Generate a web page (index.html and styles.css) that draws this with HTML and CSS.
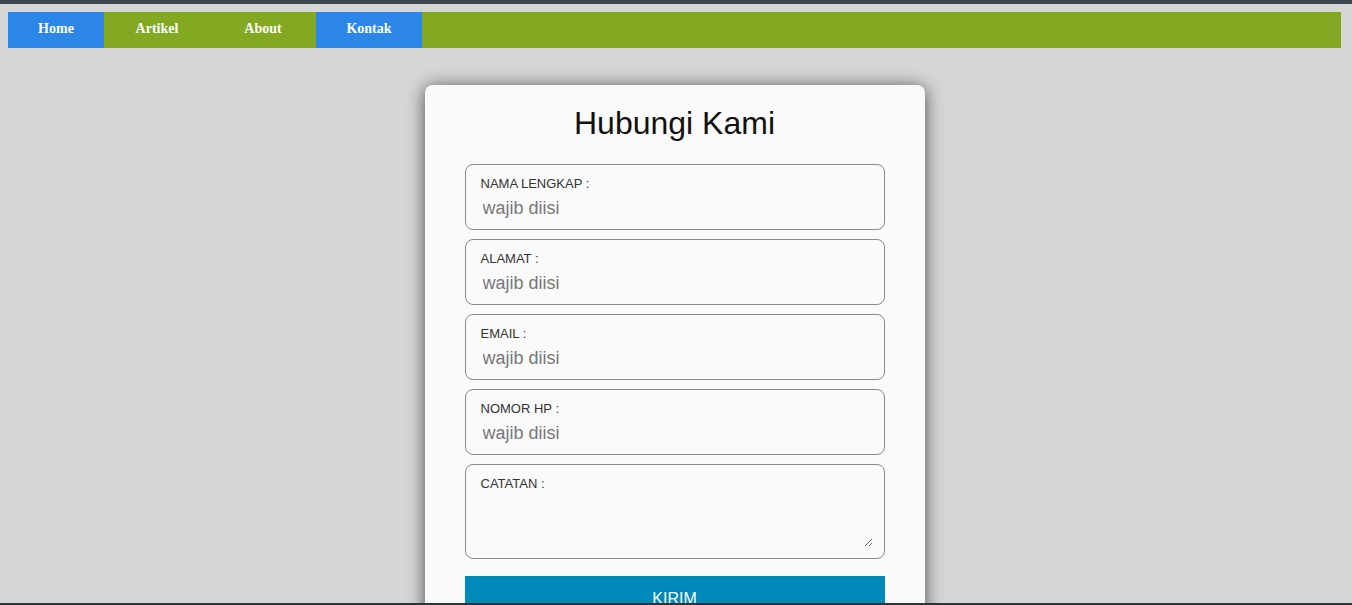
FILE: index.html
```html
<!DOCTYPE html>
<html lang="id">

<head>
    <meta charset="UTF-8">
    <meta name="viewport" content="width=device-width, initial-scale=1.0">
    <title>Kontak</title>
    <link rel="stylesheet" href="styles.css">
</head>

<body>
    <nav class="menu">
        <a class="menu-item menu-blue home" href="#">Home</a>
        <a class="menu-item" href="#">Artikel</a>
        <a class="menu-item" href="#">About</a>
        <a class="menu-item menu-blue" href="#">Kontak</a>
    </nav>

    <div class="card">
        <h2>Hubungi Kami</h2>
        <form class="form-kontak">
            <div class="field">
                <label for="nama">NAMA LENGKAP :</label>
                <input type="text" id="nama" placeholder="wajib diisi">
            </div>
            <div class="field">
                <label for="alamat">ALAMAT :</label>
                <input type="text" id="alamat" placeholder="wajib diisi">
            </div>
            <div class="field">
                <label for="email">EMAIL :</label>
                <input type="text" id="email" placeholder="wajib diisi">
            </div>
            <div class="field">
                <label for="hp">NOMOR HP :</label>
                <input type="text" id="hp" placeholder="wajib diisi">
            </div>
            <div class="field field-note">
                <label for="catatan">CATATAN :</label>
                <textarea id="catatan"></textarea>
            </div>
            <button type="submit" class="btn-kirim">KIRIM</button>
        </form>
    </div>

    <div class="bottom-line"></div>
</body>

</html>
```

FILE: styles.css
```css
html {
    border-top: 4px solid #3c474f;
    background-color: #d6d6d6;
}

body {
    margin: 8px 11px 8px 8px;
    font-family: "Liberation Sans", Arial, sans-serif;
    background-color: #d6d6d6;
}

.menu {
    display: flex;
    height: 36px;
    background-color: #82a921;
}

.menu-item {
    width: 106px;
    line-height: 34px;
    text-align: center;
    font-family: "Liberation Serif", "Times New Roman", serif;
    font-weight: bold;
    font-size: 14px;
    color: #fff;
    text-decoration: none;
}

.menu-blue {
    background-color: #2c86e8;
}

.menu-item.home {
    width: 96px;
}

.card {
    width: 500px;
    margin: 37px auto 0;
    padding: 20px 40px 20px;
    box-sizing: border-box;
    background: #fafafa;
    border-radius: 8px;
    box-shadow: 0 2px 18px rgba(0, 0, 0, 0.65);
}

.card h2 {
    margin: 0 0 22px;
    text-align: center;
    font-size: 32px;
    font-weight: normal;
    color: #111;
}

.field {
    height: 66px;
    margin-bottom: 9px;
    padding: 11px 11px 0 15px;
    box-sizing: border-box;
    border: 1px solid #8a8a8a;
    border-radius: 8px;
}

.field label {
    display: block;
    font-size: 13px;
    color: #333;
}

.field input {
    display: block;
    width: 100%;
    height: 21px;
    margin-top: 7px;
    padding: 0 2px;
    box-sizing: border-box;
    border: none;
    outline: none;
    background: transparent;
    font-family: "Liberation Sans", Arial, sans-serif;
    font-size: 18px;
    color: #333;
}

.field input::placeholder {
    color: #777;
}

.field-note {
    height: 95px;
    margin-bottom: 17px;
}

.field textarea {
    display: block;
    width: 100%;
    height: 50px;
    margin-top: 6px;
    box-sizing: border-box;
    border: none;
    outline: none;
    background: transparent;
    font-family: "Liberation Sans", Arial, sans-serif;
    font-size: 16px;
}

.btn-kirim {
    display: block;
    width: 100%;
    padding: 14px 0 11px;
    border: none;
    background-color: #008aba;
    color: #fff;
    font-family: "Liberation Sans", Arial, sans-serif;
    font-size: 16px;
}

.bottom-line {
    position: fixed;
    left: 0;
    right: 0;
    bottom: 0;
    height: 2px;
    background-color: #2d3439;
}
```
